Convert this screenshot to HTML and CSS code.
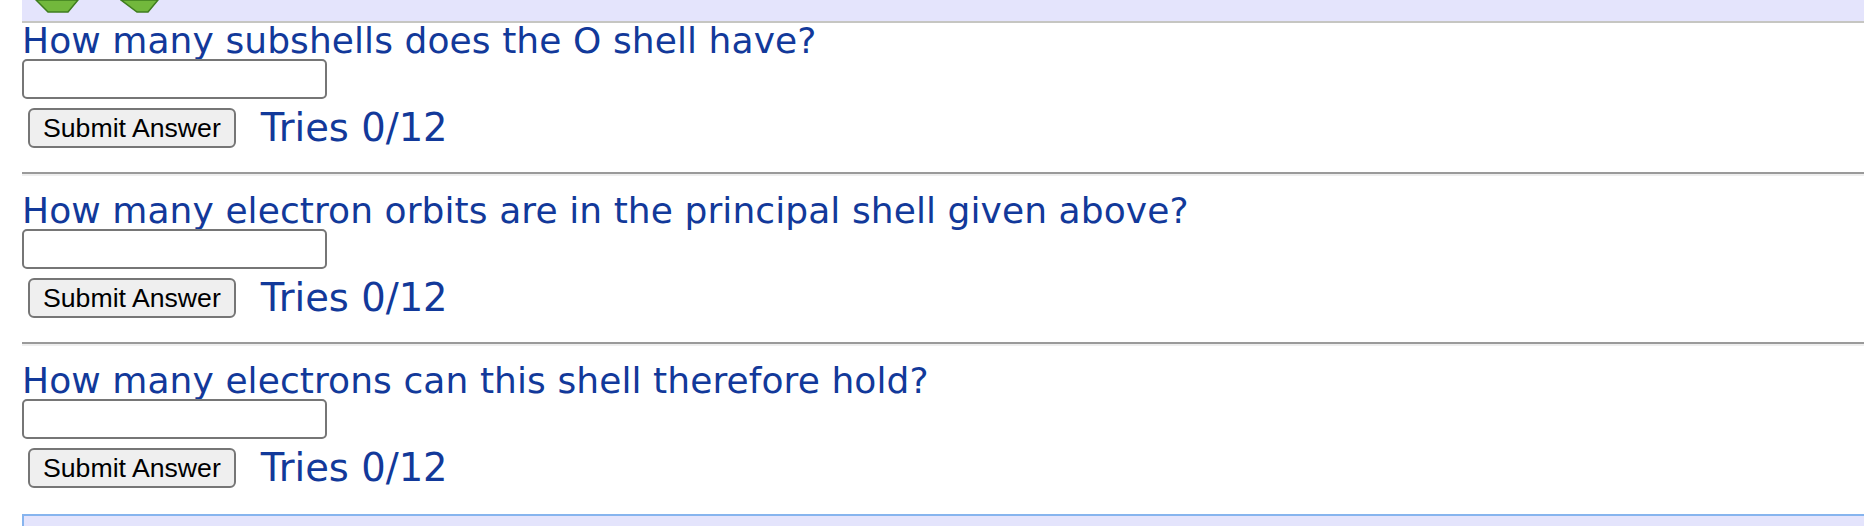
FILE: index.html
```html
<!DOCTYPE html>
<html>
<head>
<meta charset="utf-8">
<link rel="stylesheet" href="styles.css">
</head>
<body>
<div class="page">
  <div class="topbar">
    <svg class="arrow arrow-left" width="44" height="13" viewBox="0 0 44 13">
      <polygon points="1,0 43,0 33,12 13,12" fill="#72b83c" stroke="#3f7d1e" stroke-width="1.5"/>
    </svg>
    <svg class="arrow arrow-right" width="40" height="13" viewBox="0 0 40 13">
      <polygon points="1,0 38,0 28,12 17,12" fill="#72b83c" stroke="#3f7d1e" stroke-width="1.5"/>
    </svg>
  </div>

  <div class="question">
    <div class="q-text">How many subshells does the O shell have?</div>
    <input class="answer" type="text">
    <div class="submit-row">
      <button class="submit">Submit Answer</button>
      <span class="tries">Tries 0/12</span>
    </div>
  </div>

  <hr class="sep">

  <div class="question">
    <div class="q-text">How many electron orbits are in the principal shell given above?</div>
    <input class="answer" type="text">
    <div class="submit-row">
      <button class="submit">Submit Answer</button>
      <span class="tries">Tries 0/12</span>
    </div>
  </div>

  <hr class="sep">

  <div class="question">
    <div class="q-text">How many electrons can this shell therefore hold?</div>
    <input class="answer" type="text">
    <div class="submit-row">
      <button class="submit">Submit Answer</button>
      <span class="tries">Tries 0/12</span>
    </div>
  </div>

  <div class="footer-box"></div>
</div>
</body>
</html>
```

FILE: styles.css
```css
html, body {
  margin: 0;
  padding: 0;
  background: #ffffff;
  overflow: hidden;
}

.page {
  margin-left: 22px;
  font-family: "DejaVu Sans", Verdana, sans-serif;
}

.topbar {
  height: 21px;
  background: #e4e4fc;
  border-bottom: 2px solid #c6c6c2;
  display: flex;
  align-items: flex-start;
}

.arrow {
  display: block;
}

.arrow-left {
  margin-left: 13px;
}

.arrow-right {
  margin-left: 41px;
}

.question {
  display: flex;
  flex-direction: column;
  align-items: flex-start;
}

.q-text {
  font-size: 36px;
  line-height: 36px;
  letter-spacing: 0.08px;
  color: #12399a;
  white-space: nowrap;
}

.answer {
  box-sizing: border-box;
  width: 305px;
  height: 40px;
  margin: 0;
  border: 2px solid #767676;
  border-radius: 5px;
  background: #ffffff;
  padding: 2px 4px;
}

.submit-row {
  display: flex;
  align-items: center;
  margin-top: 9px;
  margin-left: 6px;
  gap: 25px;
}

.submit {
  box-sizing: border-box;
  height: 40px;
  padding: 0 13px;
  margin: 0;
  border: 2px solid #767676;
  border-radius: 6px;
  background: #efefef;
  color: #000000;
  font-family: "Liberation Sans", Arial, sans-serif;
  font-size: 26.67px;
}

.tries {
  font-size: 38.5px;
  line-height: 36px;
  color: #12399a;
}

.sep {
  margin: 24px 0 17px 0;
  height: 0;
  border: 0;
  border-top: 2px solid #9a9a9a;
  border-bottom: 2px solid #eeeeee;
}

.footer-box {
  margin-top: 26px;
  height: 10px;
  background: #e4e4fc;
  border-top: 2px solid #86b4ee;
  border-left: 2px solid #86b4ee;
}
```
